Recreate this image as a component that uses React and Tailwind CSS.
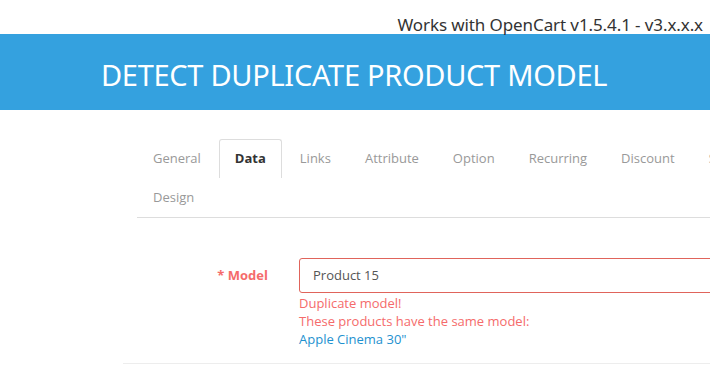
import React from 'react'

const ROW1 = ['General', 'Data', 'Links', 'Attribute', 'Option', 'Recurring', 'Discount', 'Special', 'Image', 'Reward points', 'SEO']

function Tab({ label, active }) {
  if (active) {
    return (
      <div className="h-[39px] px-[15px] mr-0.5 shrink-0 flex items-center border border-b-0 border-[#dddddd] rounded-t-[3px] font-bold text-[#333] bg-white">
        {label}
      </div>
    )
  }
  return (
    <div className="h-[39px] px-[15px] mr-0.5 shrink-0 flex items-center text-[#999] border border-transparent">
      {label}
    </div>
  )
}

export default function App() {
  return (
    <div className="w-[710px] h-[380px] overflow-hidden bg-white">
      {/* compat line */}
      <div className="h-[34px] flex items-end justify-end pr-[7px] pb-[1px]">
        <span className="text-[17px] leading-none text-[#333] font-['Noto_Sans',sans-serif] tracking-[-0.1px] whitespace-nowrap">
          Works with OpenCart v1.5.4.1 - v3.x.x.x
        </span>
      </div>

      {/* banner */}
      <div className="h-[76px] bg-[#34a1df] flex items-center pl-[101px] pt-[4px]">
        <h1 className="text-[29px] leading-none text-white font-['Noto_Sans',sans-serif] tracking-[-0.3px] whitespace-nowrap">
          DETECT DUPLICATE PRODUCT MODEL
        </h1>
      </div>

      <div className="font-['Open_Sans',sans-serif] text-[13px]">
        {/* tabs */}
        <div className="mt-[29px] ml-[137px] w-[573px] overflow-hidden border-b border-[#dddddd]">
          <div className="flex">
            {ROW1.map((t) => <Tab key={t} label={t} active={t === 'Data'} />)}
          </div>
          <div className="flex">
            <Tab label="Design" />
          </div>
        </div>

        {/* form row */}
        <div className="ml-[123px] border-b border-[#ededed] pt-[40px] pb-[15px] flex">
          <label className="w-[176px] shrink-0 pr-[31px] font-bold text-[#f56b6b] h-[35px] flex items-center justify-end">
            * Model
          </label>
          <div className="flex-1">
            <div className="h-[35px] w-[420px] border border-[#e0645b] rounded-[3px] flex items-center px-[13px] text-[#555]">
              Product 15
            </div>
            <div className="leading-[18px] mt-[1px] text-[#f56b6b]">
              <div>Duplicate model!</div>
              <div>These products have the same model:</div>
              <div className="text-[#1e91cf]">Apple Cinema 30"</div>
            </div>
          </div>
        </div>
      </div>
    </div>
  )
}
